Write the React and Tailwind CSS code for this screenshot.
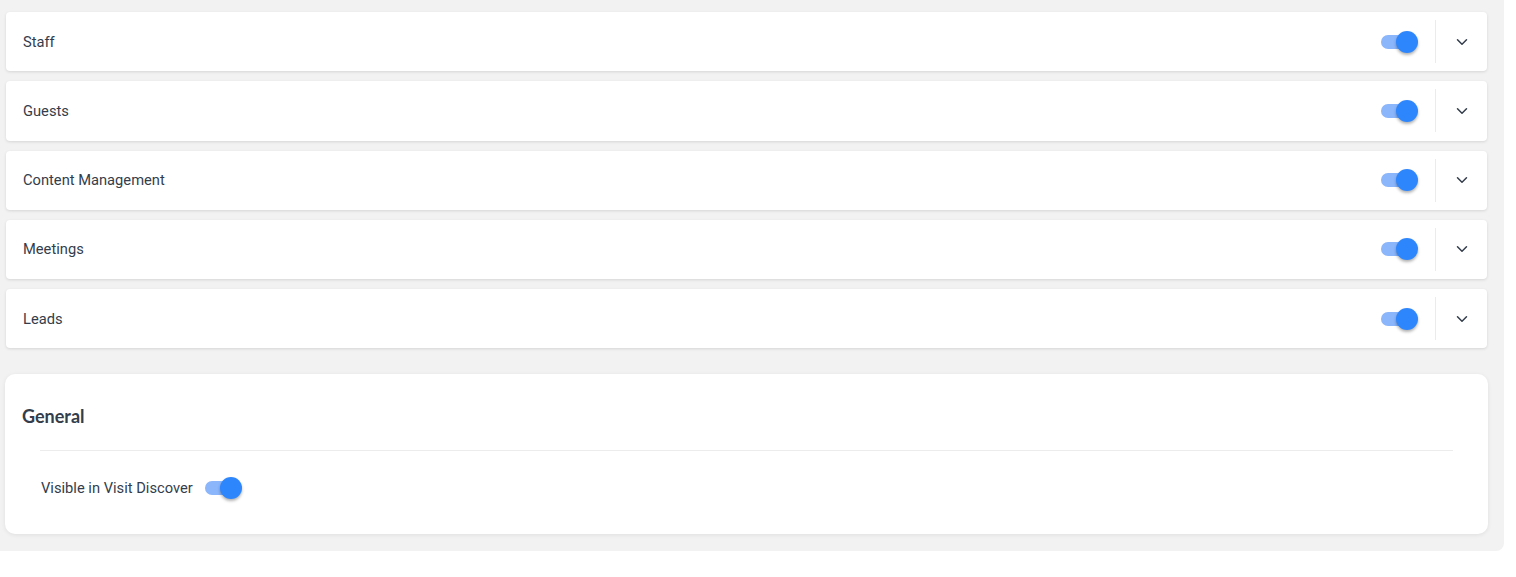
import { ChevronDown } from 'lucide-react';

const sections = ['Staff', 'Guests', 'Content Management', 'Meetings', 'Leads'];

function Toggle() {
  return (
    <div className="relative h-[22px] w-[37px] shrink-0">
      <div className="absolute left-0 top-1/2 h-[14px] w-[34px] -translate-y-1/2 rounded-full bg-[#8bb6fb]" />
      <div className="absolute right-0 top-0 h-[22px] w-[22px] rounded-full bg-[#2e86fd] shadow-[0_2px_3px_rgba(0,0,0,0.3)]" />
    </div>
  );
}

function SectionRow({ label }) {
  return (
    <div className="flex h-[59.25px] items-center rounded bg-white shadow-[0_1px_3px_rgba(0,0,0,0.12)]">
      <div className="flex-1 pl-[17px] text-[14.7px] text-[#333d4b]">{label}</div>
      <div className="pr-[17px]">
        <Toggle />
      </div>
      <div className="flex h-[43px] w-[52px] items-center justify-center border-l border-[#ebebeb]">
        <ChevronDown className="h-[18px] w-[18px] text-[#333d4b]" strokeWidth={2} />
      </div>
    </div>
  );
}

export default function App() {
  return (
    <div className="bg-white" style={{ fontFamily: 'Roboto, "Liberation Sans", sans-serif' }}>
      <div className="w-[1504px] rounded-br-lg bg-[#f2f2f2] px-[6px] pt-[12px] pb-[17px]">
        <div className="flex flex-col gap-[10px] pr-[11px]">
          {sections.map((s) => (
            <SectionRow key={s} label={s} />
          ))}
        </div>

        <div className="mt-[26px] mr-[10px] -ml-px h-[160px] rounded-[10px] bg-white shadow-[0_1px_4px_rgba(0,0,0,0.08)]">
          <div className="px-[17px] pt-[32px] pb-[24px]">
            <h2
              className="text-[18px] leading-5 font-bold text-[#333d4b]"
              style={{ fontFamily: 'Lato, "Noto Sans", sans-serif' }}
            >
              General
            </h2>
          </div>
          <div className="mx-[35px] border-t border-[#ececec]" />
          <div className="flex items-center gap-[12px] px-[36px] pt-[26px]">
            <span className="text-[14.7px] text-[#333d4b]">Visible in Visit Discover</span>
            <Toggle />
          </div>
        </div>
      </div>
    </div>
  );
}
